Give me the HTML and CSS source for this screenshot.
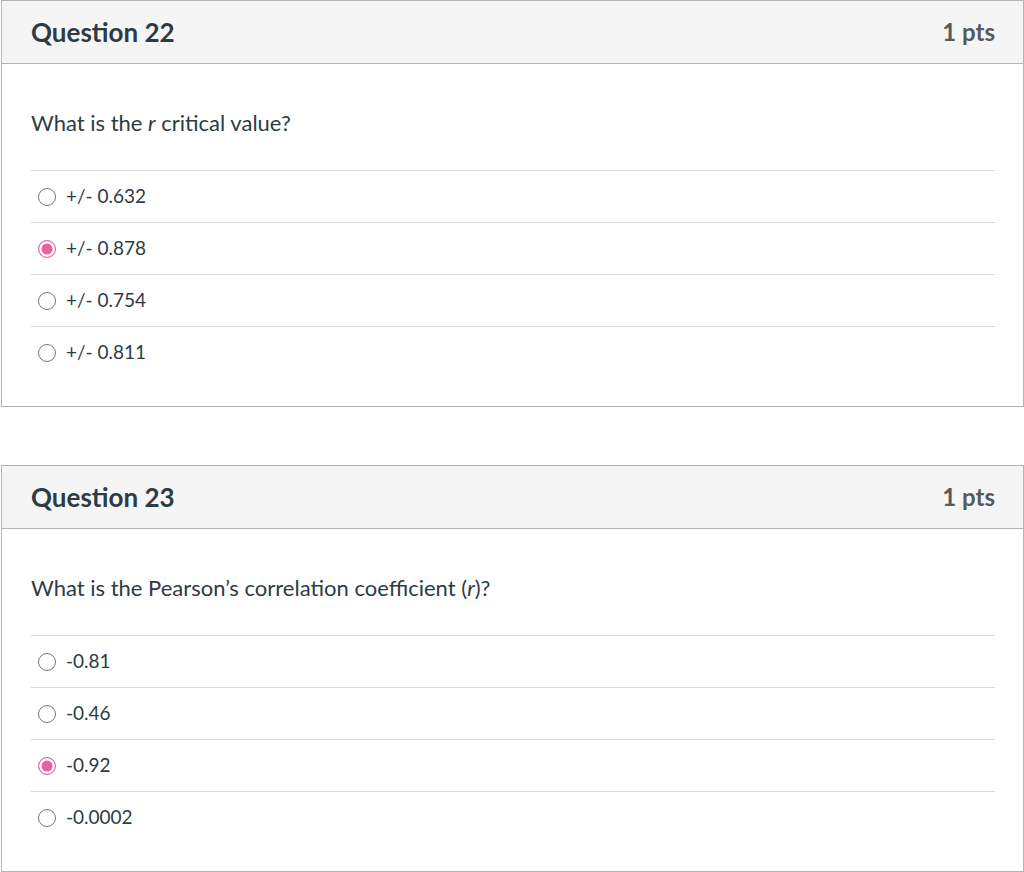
FILE: index.html
```html
<!DOCTYPE html>
<html>
<head>
<meta charset="utf-8">
<link rel="stylesheet" href="styles.css">
</head>
<body>
<div class="quiz">
  <section class="card">
    <header class="card-head">
      <h2 class="title">Question 22</h2>
      <span class="pts">1 pts</span>
    </header>
    <div class="card-body">
      <p class="question">What is the <i>r</i> critical value?</p>
      <ul class="answers">
        <li class="answer"><span class="radio"></span>+/- 0.632</li>
        <li class="answer"><span class="radio checked"></span>+/- 0.878</li>
        <li class="answer"><span class="radio"></span>+/- 0.754</li>
        <li class="answer"><span class="radio"></span>+/- 0.811</li>
      </ul>
    </div>
  </section>
  <section class="card">
    <header class="card-head">
      <h2 class="title">Question 23</h2>
      <span class="pts">1 pts</span>
    </header>
    <div class="card-body">
      <p class="question">What is the Pearson’s correlation coefficient (<i>r</i>)?</p>
      <ul class="answers">
        <li class="answer"><span class="radio"></span>-0.81</li>
        <li class="answer"><span class="radio"></span>-0.46</li>
        <li class="answer"><span class="radio checked"></span>-0.92</li>
        <li class="answer"><span class="radio"></span>-0.0002</li>
      </ul>
    </div>
  </section>
</div>
</body>
</html>
```
FILE: styles.css
```css
html, body {
  margin: 0;
  padding: 0;
  background: #fff;
}
body {
  font-family: Lato, "Liberation Sans", sans-serif;
  color: #2d3b45;
}
.quiz {
  display: flex;
  flex-direction: column;
  gap: 58px;
  padding: 0 0 0 1px;
}
.card {
  width: 1021px;
  border: 1px solid #b4b4b4;
}
.card-head {
  height: 63px;
  box-sizing: border-box;
  background: #f5f5f5;
  border-bottom: 1px solid #b4b4b4;
  display: flex;
  align-items: center;
  justify-content: space-between;
  padding: 0 28px 0 29px;
}
.title {
  margin: 0;
  font-size: 26px;
  font-weight: 700;
  color: #2d3b45;
  line-height: 30px;
}
.pts {
  font-size: 24px;
  font-weight: 700;
  color: #555a5e;
  line-height: 30px;
}
.card-body {
  padding: 46px 28px 28px 29px;
}
.question {
  margin: 0 0 34px;
  font-size: 22px;
  line-height: 26px;
}
.answers {
  list-style: none;
  margin: 0;
  padding: 0;
}
.answer {
  height: 52px;
  box-sizing: border-box;
  border-top: 1px solid #dadada;
  display: flex;
  align-items: center;
  font-size: 19px;
  line-height: 22px;
  padding-left: 7px;
  padding-bottom: 2px;
}
.radio {
  width: 18px;
  height: 18px;
  box-sizing: border-box;
  border: 1.5px solid #777;
  border-radius: 50%;
  margin-right: 10px;
  margin-top: 3px;
  flex: none;
}
.radio.checked {
  border: 1.5px solid #e8619f;
  background: #e8619f;
  box-shadow: inset 0 0 0 2.5px #fff;
}
```
